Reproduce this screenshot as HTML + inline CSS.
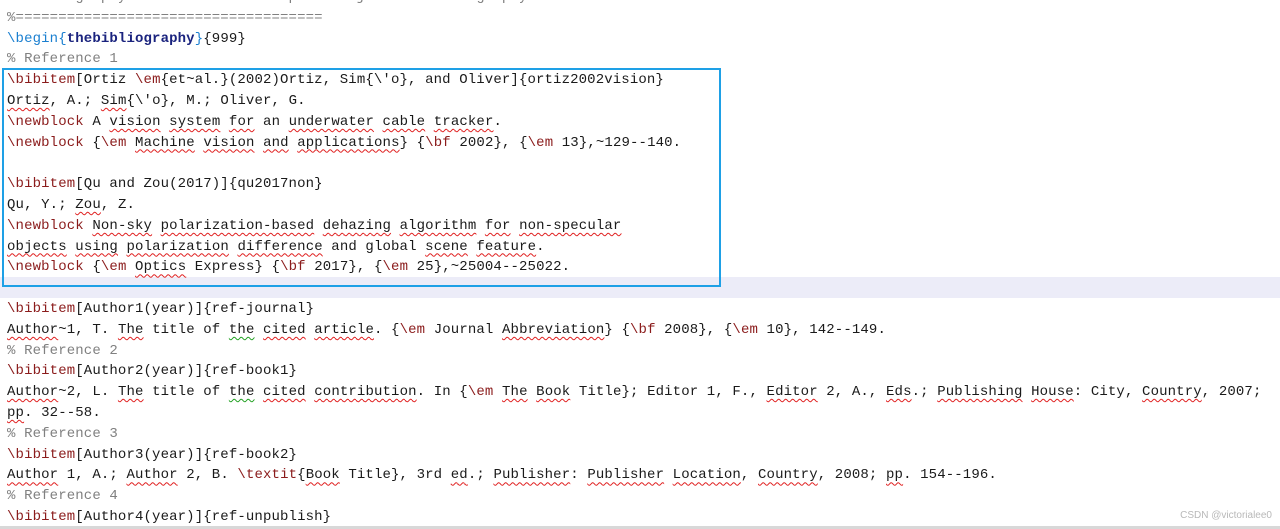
<!DOCTYPE html>
<html><head><meta charset="utf-8"><style>
html,body{margin:0;padding:0;background:#fff;width:1280px;height:529px;overflow:hidden;position:relative}
.ed{position:absolute;left:7px;top:-13px;font-family:"Liberation Mono",monospace;font-size:14px;letter-spacing:0.13px;color:#1a1a1a}
.l{height:20.8px;line-height:20.8px;white-space:pre}
.c{color:#8b1c1c}
.g{color:#808080}
.b{color:#1a7fd0}
.bb{color:#1a237e;font-weight:bold}
.s{text-decoration:underline wavy #e02020;text-decoration-thickness:1px;text-underline-offset:3px}
.sg{text-decoration:underline wavy #20a020;text-decoration-thickness:1px;text-underline-offset:3px}
.hl{position:absolute;left:0;top:277px;width:1280px;height:20.8px;background:#ececf8}
.box{position:absolute;left:2px;top:68px;width:715px;height:215px;border:2px solid #1ea0e6}
.wm{position:absolute;right:8px;bottom:8px;font-family:"Liberation Sans",sans-serif;font-size:10px;color:#b8b8b8}
.bot{position:absolute;left:0;bottom:0;width:1280px;height:3px;background:#d8d8d8}
</style></head><body>
<div class="hl"></div>
<div class="ed"><div class="l g">% Bibliography entries formatted per the journal bibliography</div><div class="l g">%====================================</div><div class="l"><span class="b">\begin{</span><span class="bb">thebibliography</span><span class="b">}</span>{999}</div><div class="l g">% Reference 1</div><div class="l"><span class="c">\bibitem</span>[Ortiz <span class="c">\em</span>{et~al.}(2002)Ortiz, Sim{\'o}, and Oliver]{ortiz2002vision}</div><div class="l"><span class="s">Ortiz</span>, A.; <span class="s">Sim</span>{\'o}, M.; Oliver, G.</div><div class="l"><span class="c">\newblock</span> A <span class="s">vision</span> <span class="s">system</span> <span class="s">for</span> an <span class="s">underwater</span> <span class="s">cable</span> <span class="s">tracker</span>.</div><div class="l"><span class="c">\newblock</span> {<span class="c">\em</span> <span class="s">Machine</span> <span class="s">vision</span> <span class="s">and</span> <span class="s">applications</span>} {<span class="c">\bf</span> 2002}, {<span class="c">\em</span> 13},~129--140.</div><div class="l"> </div><div class="l"><span class="c">\bibitem</span>[Qu and Zou(2017)]{qu2017non}</div><div class="l">Qu, Y.; <span class="s">Zou</span>, Z.</div><div class="l"><span class="c">\newblock</span> <span class="s">Non-sky</span> <span class="s">polarization-based</span> <span class="s">dehazing</span> <span class="s">algorithm</span> <span class="s">for</span> <span class="s">non-specular</span></div><div class="l"><span class="s">objects</span> <span class="s">using</span> <span class="s">polarization</span> <span class="s">difference</span> and global <span class="s">scene</span> <span class="s">feature</span>.</div><div class="l"><span class="c">\newblock</span> {<span class="c">\em</span> <span class="s">Optics</span> Express} {<span class="c">\bf</span> 2017}, {<span class="c">\em</span> 25},~25004--25022.</div><div class="l"> </div><div class="l"><span class="c">\bibitem</span>[Author1(year)]{ref-journal}</div><div class="l"><span class="s">Author</span>~1, T. <span class="s">The</span> title of <span class="sg">the</span> <span class="s">cited</span> <span class="s">article</span>. {<span class="c">\em</span> Journal <span class="s">Abbreviation</span>} {<span class="c">\bf</span> 2008}, {<span class="c">\em</span> 10}, 142--149.</div><div class="l g">% Reference 2</div><div class="l"><span class="c">\bibitem</span>[Author2(year)]{ref-book1}</div><div class="l"><span class="s">Author</span>~2, L. <span class="s">The</span> title of <span class="sg">the</span> <span class="s">cited</span> <span class="s">contribution</span>. In {<span class="c">\em</span> <span class="s">The</span> <span class="s">Book</span> Title}; Editor 1, F., <span class="s">Editor</span> 2, A., <span class="s">Eds</span>.; <span class="s">Publishing</span> <span class="s">House</span>: City, <span class="s">Country</span>, 2007;</div><div class="l"><span class="s">pp</span>. 32--58.</div><div class="l g">% Reference 3</div><div class="l"><span class="c">\bibitem</span>[Author3(year)]{ref-book2}</div><div class="l"><span class="s">Author</span> 1, A.; <span class="s">Author</span> 2, B. <span class="c">\textit</span>{<span class="s">Book</span> Title}, 3rd <span class="s">ed</span>.; <span class="s">Publisher</span>: <span class="s">Publisher</span> <span class="s">Location</span>, <span class="s">Country</span>, 2008; <span class="s">pp</span>. 154--196.</div><div class="l g">% Reference 4</div><div class="l"><span class="c">\bibitem</span>[Author4(year)]{ref-unpublish}</div></div>
<div class="box"></div>
<div class="wm">CSDN @victorialee0</div>
<div class="bot"></div>
</body></html>
